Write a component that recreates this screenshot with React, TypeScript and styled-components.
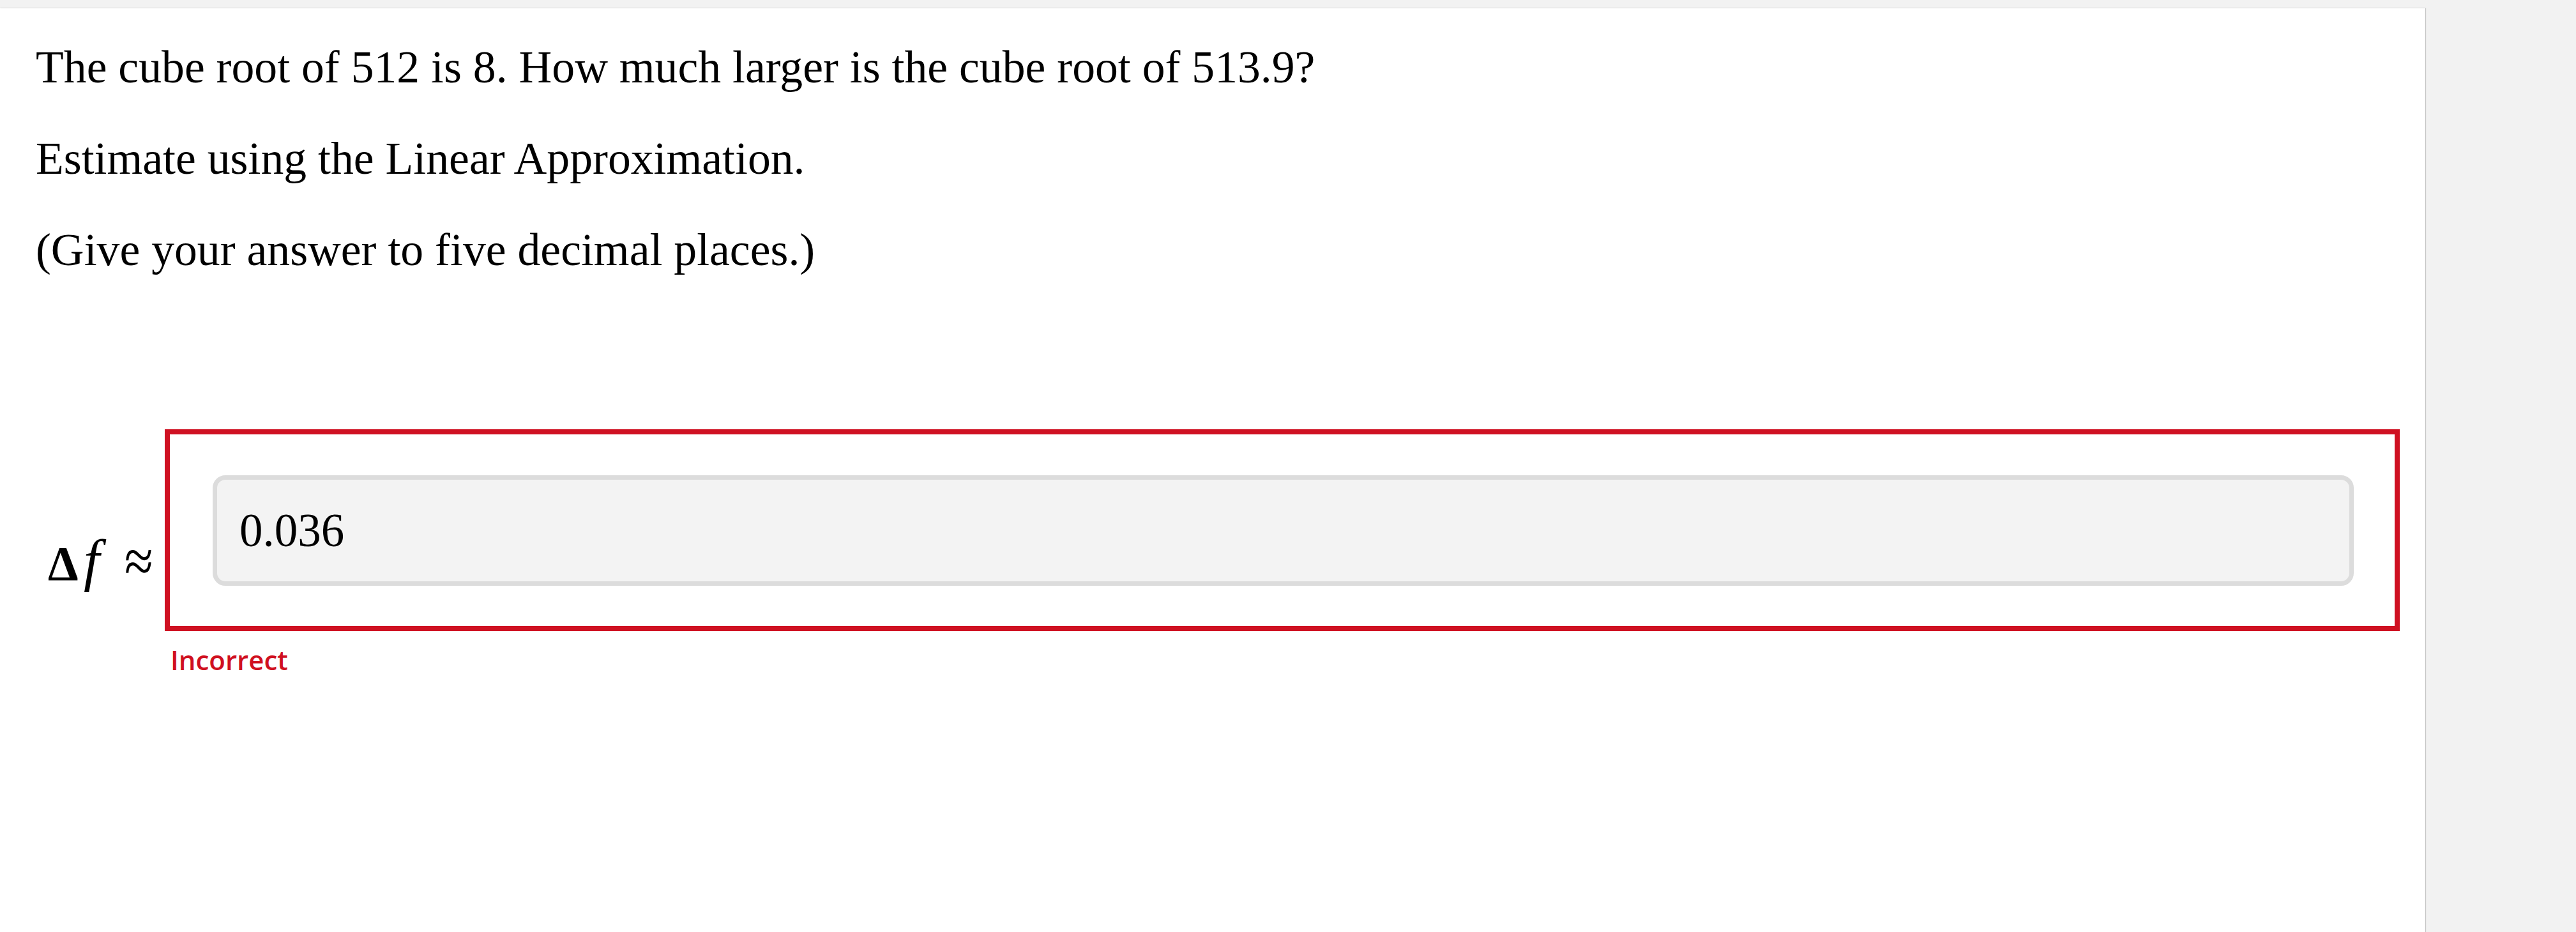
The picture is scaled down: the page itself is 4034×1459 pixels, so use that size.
import React from 'react';
import styled, { createGlobalStyle } from 'styled-components';

const GlobalStyle = createGlobalStyle`
  html, body {
    margin: 0;
    padding: 0;
    background: #f2f2f2;
  }
  body {
    font-family: 'Liberation Serif', 'Times New Roman', serif;
    color: #000;
  }
`;

const Page = styled.div`
  padding-top: 13px;
  min-height: 100vh;
  box-sizing: border-box;
`;

const Panel = styled.main`
  width: 3798px;
  min-height: calc(100vh - 13px);
  box-sizing: border-box;
  background: #fff;
  box-shadow: 1px 0 1px rgba(0, 0, 0, 0.18), 0 -1px 2px rgba(0, 0, 0, 0.06);
  padding: 52px 0 0 56px;
`;

const Para = styled.p`
  margin: 0 0 63px;
  font-size: 71.7px;
  line-height: 80px;
`;

const AnswerRow = styled.div`
  display: flex;
  align-items: flex-start;
  margin-top: 241px;
`;

const Label = styled.div`
  margin-top: 170px;
  padding-left: 19px;
  width: 202px;
  box-sizing: border-box;
  font-size: 72px;
  line-height: 72px;
  white-space: nowrap;
  display: flex;
  align-items: baseline;
`;

const Delta = styled.span`
  font-family: 'Liberation Serif', serif;
  font-weight: 700;
  font-size: 76px;
  width: 56px;
`;

const Italic = styled.i`
  font-style: italic;
  font-size: 90px;
  width: 64px;
`;

const Approx = styled.span`
  display: inline-block;
  transform: scale(1.13, 1.35);
  transform-origin: left 70%;
`;

const Field = styled.div`
  display: flex;
  flex-direction: column;
`;

const ErrorBox = styled.div`
  width: 3500px;
  box-sizing: border-box;
  border: 8px solid #cf1122;
  padding: 64px 64px 63px 67px;
`;

const InputBox = styled.div`
  height: 173px;
  box-sizing: border-box;
  border: 7px solid #dcdcdc;
  border-radius: 20px;
  background: #f3f3f3;
  display: flex;
  align-items: center;
  padding-left: 35px;
  font-size: 73px;
`;

const Feedback = styled.div`
  margin-top: 16px;
  padding-left: 9px;
  font-family: 'Open Sans', 'Noto Sans', sans-serif;
  font-weight: 600;
  font-size: 42px;
  color: #d0101f;
`;

export default function App() {
  return (
    <>
      <GlobalStyle />
      <Page>
        <Panel>
          <Para>The cube root of 512 is 8. How much larger is the cube root of 513.9?</Para>
          <Para>Estimate using the Linear Approximation.</Para>
          <Para>(Give your answer to five decimal places.)</Para>
          <AnswerRow>
            <Label>
              <Delta>Δ</Delta>
              <Italic>f</Italic>
              <Approx>≈</Approx>
            </Label>
            <Field>
              <ErrorBox>
                <InputBox>0.036</InputBox>
              </ErrorBox>
              <Feedback>Incorrect</Feedback>
            </Field>
          </AnswerRow>
        </Panel>
      </Page>
    </>
  );
}
